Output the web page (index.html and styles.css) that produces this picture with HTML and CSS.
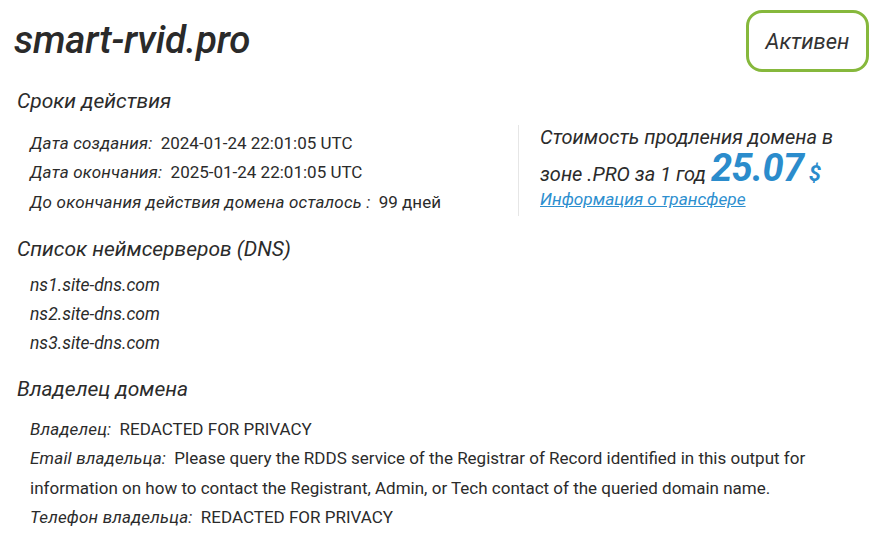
FILE: index.html
```html
<!DOCTYPE html>
<html lang="ru">
<head>
<meta charset="utf-8">
<link rel="stylesheet" href="styles.css">
</head>
<body>
<div class="page">
  <header class="head">
    <h1 class="domain">smart-rvid.pro</h1>
    <div class="status">Активен</div>
  </header>

  <section class="sec">
    <h2 class="sec-title">Сроки действия</h2>
    <div class="terms">
      <div class="rows">
        <div class="row"><span class="lbl">Дата создания:</span> 2024-01-24 22:01:05 UTC</div>
        <div class="row"><span class="lbl">Дата окончания:</span> 2025-01-24 22:01:05 UTC</div>
        <div class="row"><span class="lbl">До окончания действия домена осталось :</span> 99 дней</div>
      </div>
      <div class="price">
        <div class="price-text">Стоимость продления домена в<br>зоне .PRO за 1 год <span class="sum">25.07</span> <span class="cur">$</span></div>
        <a class="link" href="#">Информация о трансфере</a>
      </div>
    </div>
  </section>

  <section class="sec">
    <h2 class="sec-title">Список неймсерверов (DNS)</h2>
    <div class="rows">
      <div class="row ns">ns1.site-dns.com</div>
      <div class="row ns">ns2.site-dns.com</div>
      <div class="row ns">ns3.site-dns.com</div>
    </div>
  </section>

  <section class="sec">
    <h2 class="sec-title">Владелец домена</h2>
    <div class="rows owner">
      <div class="row"><span class="lbl">Владелец:</span> REDACTED FOR PRIVACY</div>
      <div class="row"><span class="lbl">Email владельца:</span> Please query the RDDS service of the Registrar of Record identified in this output for information on how to contact the Registrant, Admin, or Tech contact of the queried domain name.</div>
      <div class="row"><span class="lbl">Телефон владельца:</span> REDACTED FOR PRIVACY</div>
    </div>
  </section>
</div>
</body>
</html>
```

FILE: styles.css
```css
* { box-sizing: border-box; }
html, body { margin: 0; padding: 0; background: #fff; }
body {
  font-family: Roboto, "Noto Sans", sans-serif;
  color: #2b2b2b;
  width: 878px;
}
.page { padding: 10px 9px 0 14px; }
.head {
  display: flex;
  justify-content: space-between;
  align-items: flex-start;
}
.domain {
  margin: 9px 0 0 0;
  font-size: 38.5px;
  line-height: 42px;
  font-style: italic;
  font-weight: 500;
  color: #2a2a2a;
  letter-spacing: -0.2px;
}
.status {
  width: 123px;
  height: 62px;
  border: 3px solid #86b83c;
  border-radius: 16px;
  display: flex;
  align-items: center;
  justify-content: center;
  font-style: italic;
  font-size: 22px;
  color: #333;
}
.sec-title {
  margin: 0;
  padding-left: 3px;
  font-size: 21px;
  font-weight: 400;
  font-style: italic;
  line-height: 28px;
  color: #2b2b2b;
}
.head + .sec .sec-title { margin-top: 15px; }
.terms {
  display: flex;
  align-items: flex-start;
  margin-top: 14px;
}
.rows { padding-left: 16px; }
.terms .rows { width: 504px; }
.row {
  font-size: 17px;
  line-height: 29.3px;
  color: #2b2b2b;
}
.lbl { font-style: italic; margin-right: 4px; letter-spacing: 0.2px; }
.ns { font-style: italic; font-size: 17.5px; }
.price {
  border-left: 1px solid #e6e6e6;
  padding-left: 21px;
  height: 91px;
  margin-top: -4px;
}
.price-text {
  font-style: italic;
  font-size: 20px;
  line-height: 32px;
  color: #2b2b2b;
  margin-top: -4px;
}
.sum {
  font-size: 38px;
  font-weight: 700;
  font-style: italic;
  color: #2b8ccc;
  line-height: 30px;
  letter-spacing: -0.5px;
}
.cur {
  font-size: 22px;
  font-weight: 700;
  color: #2b8ccc;
}
.link {
  display: block;
  font-style: italic;
  font-size: 17.3px;
  line-height: 22px;
  color: #2d8fcf;
  text-decoration: underline;
  margin-top: -2px;
}
.sec + .sec { margin-top: 18px; }
.sec + .sec + .sec { margin-top: 16px; }
.sec + .sec .rows { margin-top: 8px; }
.owner { max-width: 800px; }
.owner .row { line-height: 29.5px; }
.sec + .sec .owner { margin-top: 12px; }
```
